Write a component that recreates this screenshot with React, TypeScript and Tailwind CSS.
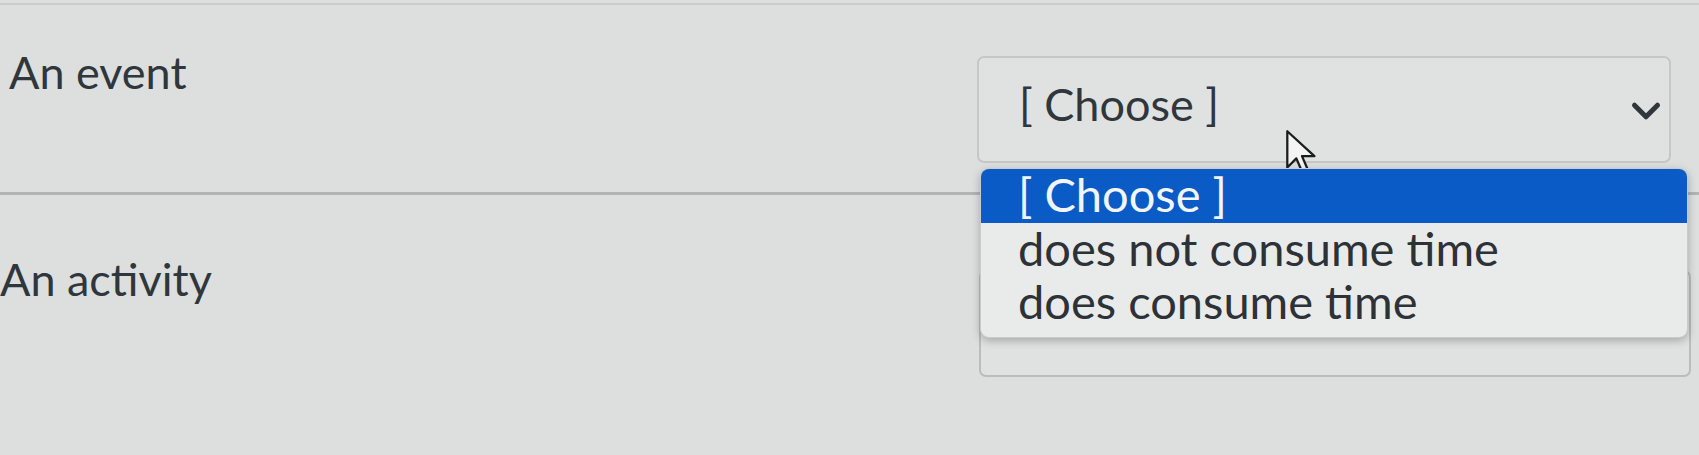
import { ChevronDown } from 'lucide-react'

function Cursor() {
  return (
    <svg
      className="absolute left-[1285px] top-[129px] pointer-events-none"
      width="34"
      height="52"
      viewBox="0 0 15 23"
    >
      <path
        d="M1 1 L1 17 L5 13 L8 20 L10.5 19 L7.5 12 L13 12 Z"
        fill="#f4f4f4"
        stroke="#1c1c1c"
        strokeWidth="1"
        strokeLinejoin="round"
      />
    </svg>
  )
}

export default function App() {
  const options = ['[ Choose ]', 'does not consume time', 'does consume time']

  return (
    <div className="relative w-[1699px] h-[455px] overflow-hidden bg-[#dcdfdd] font-['Lato','Noto_Sans',sans-serif] text-[#2f363c]">
      <div className="border-t-2 border-[#c9cccb] mt-[3px]" />

      {/* Question row 1 */}
      <div className="flex justify-between items-start h-[190px] pl-[9px] pr-[28px] border-b-[3px] border-[#b0b5b3]">
        <div className="text-[45px] leading-none mt-[45px]">An event</div>
        <div className="relative mt-[51px] w-[694px]">
          <div className="flex items-center justify-between h-[107px] pl-[40px] pr-0 pb-[10px] rounded-[7px] border-2 border-[#c3c7c5] bg-[#dfe2e0]">
            <span className="text-[45px] leading-none">[ Choose ]</span>
            <ChevronDown className="w-[46px] h-[46px] text-[#2f363c] mt-[12px]" strokeWidth={2.6} />
          </div>

          {/* Open list */}
          <ul className="absolute left-[3px] top-[112px] w-[708px] z-10 rounded-[9px] bg-[#e9ebea] shadow-[0_3px_8px_rgba(0,0,0,0.25)] border border-[#c8cbca] pb-[8px]">
            {options.map((o, i) => (
              <li
                key={o}
                className={
                  i === 0
                    ? 'pl-[37px] pb-[4px] rounded-t-[8px] text-[47px] leading-[50px] bg-[#0b5bc6] text-[#f2f5fa]'
                    : 'pl-[37px] pb-[3px] text-[47px] leading-[50px] text-[#2c3237]'
                }
              >
                {o}
              </li>
            ))}
          </ul>
        </div>
      </div>

      {/* Question row 2 */}
      <div className="flex justify-between items-start pl-0 pr-[20px]">
        <div className="text-[45px] leading-none mt-[62px]">An activity</div>
        <div className="mt-[75px] w-[712px] -mr-[12px]">
          <div className="h-[107px] rounded-[7px] border-2 border-[#b9bdbb] bg-[#dfe2e0]" />
        </div>
      </div>

      <Cursor />
    </div>
  )
}
